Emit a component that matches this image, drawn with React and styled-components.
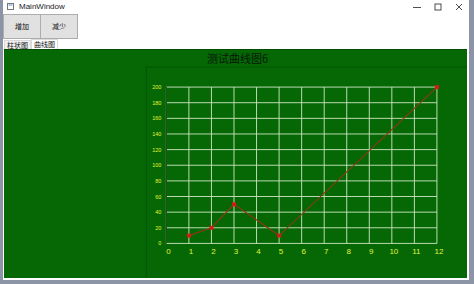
import React from 'react';
import styled, { createGlobalStyle } from 'styled-components';

const GlobalStyle = createGlobalStyle`
  html, body {
    margin: 0;
    padding: 0;
    width: 474px;
    height: 284px;
    overflow: hidden;
    background: #8b95a5;
  }
`;

const Desktop = styled.div`
  width: 474px;
  height: 284px;
  box-sizing: border-box;
  padding: 0 5px 4px 3px;
  display: flex;
  font-family: 'Liberation Sans', 'Noto Sans CJK SC', sans-serif;
`;

const Window = styled.div`
  flex: 1;
  display: flex;
  flex-direction: column;
  background: #ffffff;
`;

const TitleBar = styled.div`
  height: 14px;
  display: flex;
  align-items: center;
  padding-left: 4px;
  font-size: 8px;
  color: #1a1a1a;
`;

const TitleText = styled.span`
  margin-left: 5px;
  flex: 1;
`;

const Controls = styled.div`
  display: flex;
  align-items: center;
  gap: 13px;
  padding-right: 6px;
`;

const Toolbar = styled.div`
  display: flex;
  height: 25px;
`;

const PushButton = styled.button`
  width: 38px;
  height: 25px;
  box-sizing: border-box;
  border: 1px solid #adadad;
  margin-left: ${({ $first }) => ($first ? '0' : '-1px')};
  background: #e1e1e1;
  font-family: 'Noto Sans CJK SC', sans-serif;
  font-size: 7px;
  color: #111;
  padding: 0;
`;

const TabBar = styled.div`
  display: flex;
  align-items: flex-end;
  height: 10px;
  padding-left: 1px;
`;

const Tab = styled.div`
  height: ${({ $active }) => ($active ? '10px' : '9px')};
  padding: 0 2px;
  box-sizing: border-box;
  border: 1px solid #d9d9d9;
  border-bottom: none;
  background: ${({ $active }) => ($active ? '#ffffff' : '#f0f0f0')};
  font-family: 'Noto Sans CJK SC', sans-serif;
  font-size: 7px;
  line-height: 8px;
  color: #111;
`;

const Pane = styled.div`
  flex: 1;
  margin-left: 1px;
  margin-right: 2px;
  margin-bottom: 2px;
  background: #056805;
  border-top: 1px solid #024d02;
  display: flex;
`;

const ChartSvg = styled.svg`
  flex: 1;
  display: block;
`;

const X0 = 162;
const X1 = 432;
const Y0 = 193;
const Y1 = 37;
const xs = (v) => X0 + ((X1 - X0) * v) / 12;
const ys = (v) => Y0 - ((Y0 - Y1) * v) / 200;

const points = [
  [1, 10],
  [2, 20],
  [3, 50],
  [5, 10],
  [12, 200],
];

const Chart = () => {
  const xTicks = Array.from({ length: 13 }, (_, i) => i);
  const yTicks = Array.from({ length: 11 }, (_, i) => i * 20);
  return (
    <ChartSvg viewBox="0 0 462 228" preserveAspectRatio="none">
      <rect x="142" y="17" width="330" height="220" fill="none" stroke="#035503" strokeWidth="1" />
      <text
        x="233"
        y="13"
        textAnchor="middle"
        fontSize="11"
        fill="#081808"
        fontFamily="'Noto Sans CJK SC', sans-serif"
      >
        测试曲线图6
      </text>
      {yTicks.map((t) => (
        <g key={`y${t}`}>
          <line x1={X0} x2={X1} y1={ys(t)} y2={ys(t)} stroke="#cfe6c4" strokeWidth="0.9" />
          <text
            x="157"
            y={ys(t) + 2}
            textAnchor="end"
            fontSize="5.5"
            fill="#e4f23a"
            fontFamily="'Liberation Sans', sans-serif"
          >
            {t}
          </text>
        </g>
      ))}
      {xTicks.map((t) => (
        <g key={`x${t}`}>
          <line x1={xs(t)} x2={xs(t)} y1={Y1} y2={Y0} stroke="#cfe6c4" strokeWidth="0.9" />
          <text
            x={xs(t) + 2}
            y="204"
            textAnchor="middle"
            fontSize="8"
            fill="#e4f23a"
            fontFamily="'Liberation Sans', sans-serif"
          >
            {t}
          </text>
        </g>
      ))}
      <line x1={X0} x2={X0} y1={Y1} y2={Y0} stroke="#0d3a0d" strokeWidth="1" />
      <polyline
        points={points.map(([x, y]) => `${xs(x)},${ys(y)}`).join(' ')}
        fill="none"
        stroke="#8a3a12"
        strokeWidth="1.2"
      />
      {points.map(([x, y]) => (
        <rect key={x} x={xs(x) - 2} y={ys(y) - 2} width="4" height="4" fill="#d41a12" />
      ))}
    </ChartSvg>
  );
};

const App = () => (
  <>
    <GlobalStyle />
    <Desktop>
      <Window>
        <TitleBar>
          <svg width="7" height="7" viewBox="0 0 7 7">
            <rect x="0.5" y="0.5" width="6" height="6" fill="#fff" stroke="#777" />
            <rect x="1.5" y="1.5" width="4" height="1" fill="#5a8fd0" />
          </svg>
          <TitleText>MainWindow</TitleText>
          <Controls>
            <svg width="8" height="8" viewBox="0 0 8 8">
              <line x1="0" y1="4.5" x2="8" y2="4.5" stroke="#222" strokeWidth="0.8" />
            </svg>
            <svg width="8" height="8" viewBox="0 0 8 8">
              <rect x="1" y="1" width="6" height="6" fill="none" stroke="#222" strokeWidth="0.8" />
            </svg>
            <svg width="8" height="8" viewBox="0 0 8 8">
              <path d="M1 1 L7 7 M7 1 L1 7" stroke="#222" strokeWidth="0.8" />
            </svg>
          </Controls>
        </TitleBar>
        <Toolbar>
          <PushButton $first>增加</PushButton>
          <PushButton>减少</PushButton>
        </Toolbar>
        <TabBar>
          <Tab>柱状图</Tab>
          <Tab $active>曲线图</Tab>
        </TabBar>
        <Pane>
          <Chart />
        </Pane>
      </Window>
    </Desktop>
  </>
);

export default App;
